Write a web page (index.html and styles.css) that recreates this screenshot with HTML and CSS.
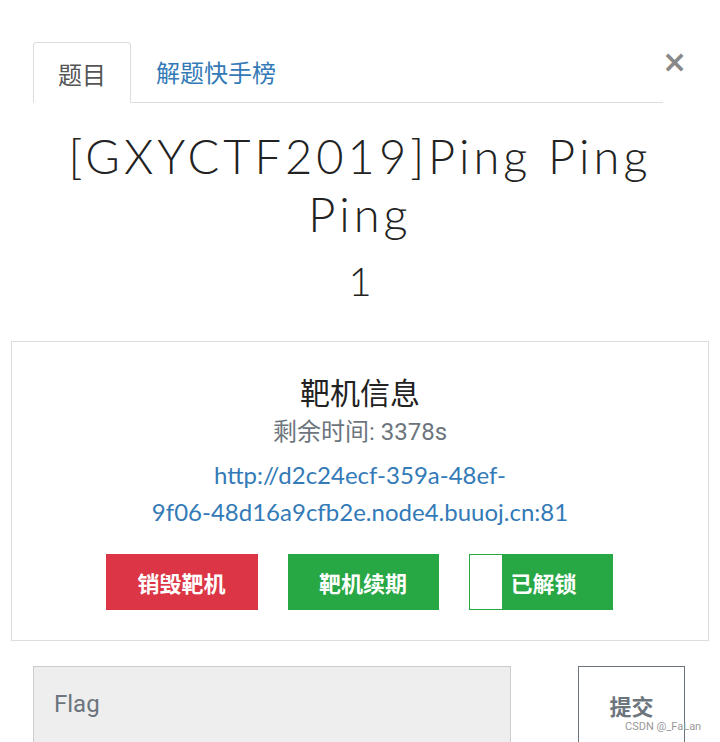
FILE: index.html
```html
<!DOCTYPE html>
<html lang="zh">
<head>
<meta charset="utf-8">
<title>Ping Ping Ping</title>
<link rel="stylesheet" href="styles.css">
</head>
<body>
<div class="modal">
  <div class="head">
    <ul class="tabs">
      <li class="tab active">题目</li>
      <li class="tab">解题快手榜</li>
    </ul>
    <span class="close">×</span>
  </div>
  <h1 class="title">[GXYCTF2019]Ping Ping Ping</h1>
  <div class="score">1</div>
  <div class="box">
    <div class="box-title">靶机信息</div>
    <div class="remain">剩余时间: 3378s</div>
    <a class="url">http://d2c24ecf-359a-48ef-<br>9f06-48d16a9cfb2e.node4.buuoj.cn:81</a>
    <div class="actions">
      <button class="btn red">销毁靶机</button>
      <button class="btn green">靶机续期</button>
      <button class="btn green toggle"><span class="knob"></span><span class="lbl">已解锁</span></button>
    </div>
  </div>
  <div class="form">
    <div class="flag">Flag</div>
    <button class="submit">提交</button>
  </div>
</div>
<div class="mark">CSDN @_FaLan</div>
</body>
</html>
```
FILE: styles.css
```css
html, body { margin: 0; padding: 0; background: #fff; }
body {
  font-family: Lato, "Noto Sans CJK SC", sans-serif;
  color: #212529;
  width: 720px;
  height: 742px;
  overflow: hidden;
  position: relative;
}
.modal { padding: 42px 11px 0 11px; }
.head { display: flex; align-items: flex-start; padding-left: 22px; }
.tabs {
  list-style: none; margin: 0; padding: 0;
  display: flex; width: 630px; height: 61px;
  border-bottom: 1px solid #ddd;
  box-sizing: border-box;
}
.tab {
  font-size: 24px; line-height: 60px; padding: 0 24px;
  color: #337ab7;
  font-family: "Noto Sans CJK SC", sans-serif;
}
.tab.active {
  color: #555;
  border: 1px solid #ddd; border-bottom-color: #fff;
  border-radius: 4px 4px 0 0;
  height: 61px; box-sizing: border-box; line-height: 62px;
  margin-bottom: -1px;
  width: 98px; padding: 0; text-align: center;
}
.tab + .tab { padding-left: 25px; }
.close {
  margin-left: -1px; margin-top: 4px;
  font-family: "DejaVu Sans", sans-serif;
  font-size: 30px; font-weight: bold; color: #888; line-height: 32px;
  width: 24px; text-align: center;
}
.title {
  margin: 24px 40px 0; text-align: center;
  font-weight: 300; font-size: 47px; line-height: 58px;
  letter-spacing: 4px; color: #222;
}
.score { text-align: center; font-size: 40px; line-height: 58px; font-weight: 300; margin-top: 9px; color: #222; }
.box {
  margin-top: 31px; border: 1px solid #ddd; height: 300px; box-sizing: border-box;
  text-align: center; padding-top: 28px;
}
.box-title { font-family: "Noto Sans CJK SC", sans-serif; font-size: 30px; line-height: 42px; color: #222; }
.remain { font-size: 24px; line-height: 40px; color: #6c757d; font-family: Roboto, "Noto Sans CJK SC", sans-serif; margin-top: 0; }
.url {
  display: block; margin: 4px auto 0; white-space: nowrap;
  font-size: 24px; line-height: 37px; color: #337ab7;
}
.actions { display: flex; justify-content: center; gap: 30px; margin-top: 24px; padding-right: 2px; }
.btn {
  height: 56px; width: 152px; border: 0; margin: 0; padding: 0;
  font-family: "Noto Sans CJK SC", sans-serif; font-weight: bold; font-size: 22px; color: #fff;
}
.red { background: #dc3545; }
.green { background: #28a745; }
.btn.green { width: 151px; }
.btn.toggle {
  width: 144px; display: flex; align-items: stretch; border: 1px solid #28a745; box-sizing: border-box;
}
.knob { width: 32px; background: #fff; }
.lbl { flex: 1; display: flex; align-items: center; justify-content: flex-start; padding-left: 9px; }
.form { display: flex; padding-left: 22px; margin-top: 25px; gap: 67px; }
.flag {
  width: 478px; height: 77px; box-sizing: border-box; background: #eee; border: 1px solid #ccc;
  font-family: Roboto, sans-serif; font-size: 24px; color: #6c757d; line-height: 75px; padding-left: 20px;
}
.submit {
  width: 107px; height: 77px; box-sizing: border-box; background: #fff; border: 1px solid #6c757d;
  font-family: "Noto Sans CJK SC", sans-serif; font-weight: bold; font-size: 22px; color: #6c757d; padding: 0;
}
.mark {
  position: absolute; left: 625px; top: 719px;
  font-family: Roboto, sans-serif; font-size: 11px; color: #999; line-height: 16px;
}
```
